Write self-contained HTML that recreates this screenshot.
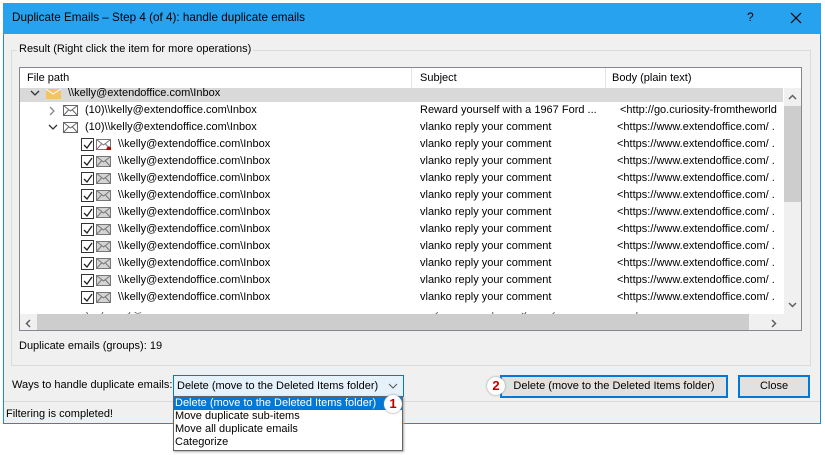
<!DOCTYPE html>
<html><head><meta charset="utf-8"><style>
*{margin:0;padding:0;box-sizing:border-box}
body{width:825px;height:455px;background:#fff;font-family:"Liberation Sans",sans-serif;font-size:11px;color:#000;position:relative;overflow:hidden}
.a{position:absolute;white-space:nowrap}
.row{position:absolute;left:20px;width:763px;height:17px;line-height:17px;overflow:hidden}
.row span{position:absolute;top:0}
.cb{position:absolute;width:13px;height:13px;border:1px solid #333;background:#fff;top:2px}
.env{position:absolute;width:15px;height:11px;top:3px}
</style></head><body>
<div class="a" style="left:3px;top:3px;width:818px;height:421px;border:1px solid #1a8ce0;background:#f0f0f0"></div>
<div class="a" style="left:3px;top:3px;width:818px;height:31px;background:#27a2ee"></div>
<div class="a" style="left:12px;top:11px;font-size:11.7px">Duplicate Emails – Step 4 (of 4): handle duplicate emails</div>
<div class="a" style="left:747px;top:10px;font-size:12px">?</div>
<svg class="a" style="left:790px;top:12px" width="12" height="12"><path d="M1 1L11 11M11 1L1 11" stroke="#000" stroke-width="1.2"/></svg>
<div class="a" style="left:11px;top:50px;width:800px;height:316px;border:1px solid #dcdcdc"></div>
<div class="a" style="left:17px;top:43px;background:#f0f0f0;padding:0 2px">Result (Right click the item for more operations)</div>
<div class="a" style="left:19px;top:67px;width:783px;height:264px;border:1px solid #828790;background:#fff;overflow:hidden">
<div class="a" style="left:391px;top:0;width:1px;height:20px;background:#e5e5e5"></div>
<div class="a" style="left:585px;top:0;width:1px;height:20px;background:#e5e5e5"></div>
<div class="a" style="left:7px;top:4px">File path</div>
<div class="a" style="left:400px;top:4px">Subject</div>
<div class="a" style="left:592px;top:4px">Body (plain text)</div>
<div class="a" style="left:0;top:20px;width:763px;height:14px;background:#d9d9d9"></div>
<div class="a" style="left:0;top:14px">
<div class="row" style="left:0;top:3px">
<svg class="a" style="left:10px;top:5px" width="10" height="7"><path d="M1 1L5 5L9 1" stroke="#333" fill="none" stroke-width="1.3"/></svg>
<svg class="a" style="left:26px;top:2px" width="16" height="13"><rect x="0" y="2" width="15" height="10" fill="#f2c36b"/><path d="M0 2L7 7L15 2" stroke="#fff" fill="none"/></svg>
<span style="left:48px">\\kelly@extendoffice.com\Inbox</span></div>
<div class="row" style="left:0;top:20px">
<svg class="a" style="left:29px;top:4px" width="7" height="10"><path d="M1 1L5 5L1 9" stroke="#888" fill="none" stroke-width="1.3"/></svg>
<svg class="env" style="left:43px" width="15" height="11"><rect x=".5" y=".5" width="14" height="10" fill="#fff" stroke="#666"/><path d="M.5 .5L7.5 6L14.5 .5M.5 10.5L5.5 5M14.5 10.5L9.5 5" stroke="#666" fill="none"/></svg>
<span style="left:65px">(10)\\kelly@extendoffice.com\Inbox</span><span style="left:400px">Reward yourself with a 1967 Ford ...</span><span style="left:600px">&lt;http://go.curiosity-fromtheworld</span></div>
<div class="row" style="left:0;top:37px">
<svg class="a" style="left:28px;top:5px" width="10" height="7"><path d="M1 1L5 5L9 1" stroke="#333" fill="none" stroke-width="1.3"/></svg>
<svg class="env" style="left:43px" width="15" height="11"><rect x=".5" y=".5" width="14" height="10" fill="#fff" stroke="#666"/><path d="M.5 .5L7.5 6L14.5 .5M.5 10.5L5.5 5M14.5 10.5L9.5 5" stroke="#666" fill="none"/></svg>
<span style="left:65px">(10)\\kelly@extendoffice.com\Inbox</span><span style="left:400px">vlanko reply your comment</span><span style="left:597px">&lt;https://www.extendoffice.com/ .</span></div>
</div>
<div id="rows"></div>
<div class="a" style="left:0;top:244px;width:763px;height:6px;overflow:hidden;color:#555">
<div class="a" style="left:65px;top:-9px">(10)\\kelly@extendoffice.com\Inbox</div><div class="a" style="left:400px;top:-9px">Billy comment posting that you follo</div><div class="a" style="left:597px;top:-9px">&lt;https://www.extendoffice.com/ .</div></div>
<div class="a" style="left:764px;top:20px;width:17px;height:227px;background:#f0f0f0"></div>
<div class="a" style="left:764px;top:38px;width:17px;height:96px;background:#cdcdcd"></div>
<svg class="a" style="left:768px;top:26px" width="9" height="6"><path d="M1 5L4.5 1.5L8 5" stroke="#606060" fill="none" stroke-width="1.5"/></svg>
<svg class="a" style="left:768px;top:234px" width="9" height="6"><path d="M1 1L4.5 4.5L8 1" stroke="#606060" fill="none" stroke-width="1.5"/></svg>
<div class="a" style="left:0;top:246px;width:781px;height:17px;background:#f0f0f0"></div>
<div class="a" style="left:17px;top:246px;width:712px;height:17px;background:#cdcdcd"></div>
<svg class="a" style="left:5px;top:251px" width="6" height="9"><path d="M5 1L1.5 4.5L5 8" stroke="#606060" fill="none" stroke-width="1.5"/></svg>
<svg class="a" style="left:751px;top:251px" width="6" height="9"><path d="M1 1L4.5 4.5L1 8" stroke="#606060" fill="none" stroke-width="1.5"/></svg>
</div>
<div class="a" style="left:19px;top:340px">Duplicate emails (groups):  19</div>
<div class="a" style="left:12px;top:379px">Ways to handle duplicate emails:</div>
<div class="a" style="left:173px;top:375px;width:231px;height:22px;border:1px solid #0078d7;background:#e5f1fb;padding:4px 0 0 3px">Delete (move to the Deleted Items folder)</div>
<svg class="a" style="left:388px;top:383px" width="10" height="7"><path d="M1 1L5 5L9 1" stroke="#555" fill="none"/></svg>
<div class="a" style="left:500px;top:375px;width:228px;height:23px;border:2px solid #0078d7;background:#e1e1e1;text-align:center;line-height:19px">Delete (move to the Deleted Items folder)</div>
<div class="a" style="left:738px;top:375px;width:72px;height:23px;border:2px solid #0078d7;background:#e1e1e1;text-align:center;line-height:19px">Close</div>
<div class="a" style="left:487px;top:377px;width:18px;height:18px;border-radius:9px;background:#fff;box-shadow:0 0 2px #888;color:#c00000;font-weight:bold;font-size:13px;text-align:center;line-height:18px">2</div>
<div class="a" style="left:4px;top:401px;width:816px;height:1px;background:#dadada"></div>
<div class="a" style="left:6px;top:408px">Filtering is completed!</div>
<div class="a" style="left:173px;top:396px;width:230px;height:55px;border:1px solid #646464;background:#fff;box-shadow:1px 1px 2px #aaa">
<div style="background:#0078d7;color:#fff;height:13px;line-height:13px;padding-left:1px">Delete (move to the Deleted Items folder)</div>
<div style="height:13px;line-height:13px;padding-left:1px">Move duplicate sub-items</div>
<div style="height:13px;line-height:13px;padding-left:1px">Move all duplicate emails</div>
<div style="height:13px;line-height:13px;padding-left:1px">Categorize</div>
</div>
<div class="a" style="left:384px;top:395px;width:18px;height:18px;border-radius:9px;background:#fff;box-shadow:0 0 2px #888;color:#c00000;font-weight:bold;font-size:13px;text-align:center;line-height:18px">1</div>
<script>
var h='';for(var i=0;i<10;i++){var t=68+i*17;var dot=i==0?'<circle cx="13" cy="10" r="2.5" fill="#c00000"/>':'';var fill=i==0?'#fff':'#d4d4d4';
h+='<div class="row" style="left:0;top:'+t+'px"><div class="cb" style="left:61px"><svg width="11" height="11" style="position:absolute;left:0;top:0"><path d="M2 6L5 9L10 2" stroke="#222" fill="none" stroke-width="1.3"/></svg></div><svg class="env" style="left:76px" width="16" height="13"><rect x=".5" y=".5" width="14" height="10" fill="'+fill+'" stroke="#777"/><path d="M.5 .5L7.5 6L14.5 .5M.5 10.5L5.5 5M14.5 10.5L9.5 5" stroke="#777" fill="none"/>'+dot+'</svg><span style="left:98px">\\\\kelly@extendoffice.com\\Inbox</span><span style="left:400px">vlanko reply your comment</span><span style="left:597px">&lt;https://www.extendoffice.com/ .</span></div>';}
document.getElementById('rows').outerHTML=h;
</script>
</body></html>
